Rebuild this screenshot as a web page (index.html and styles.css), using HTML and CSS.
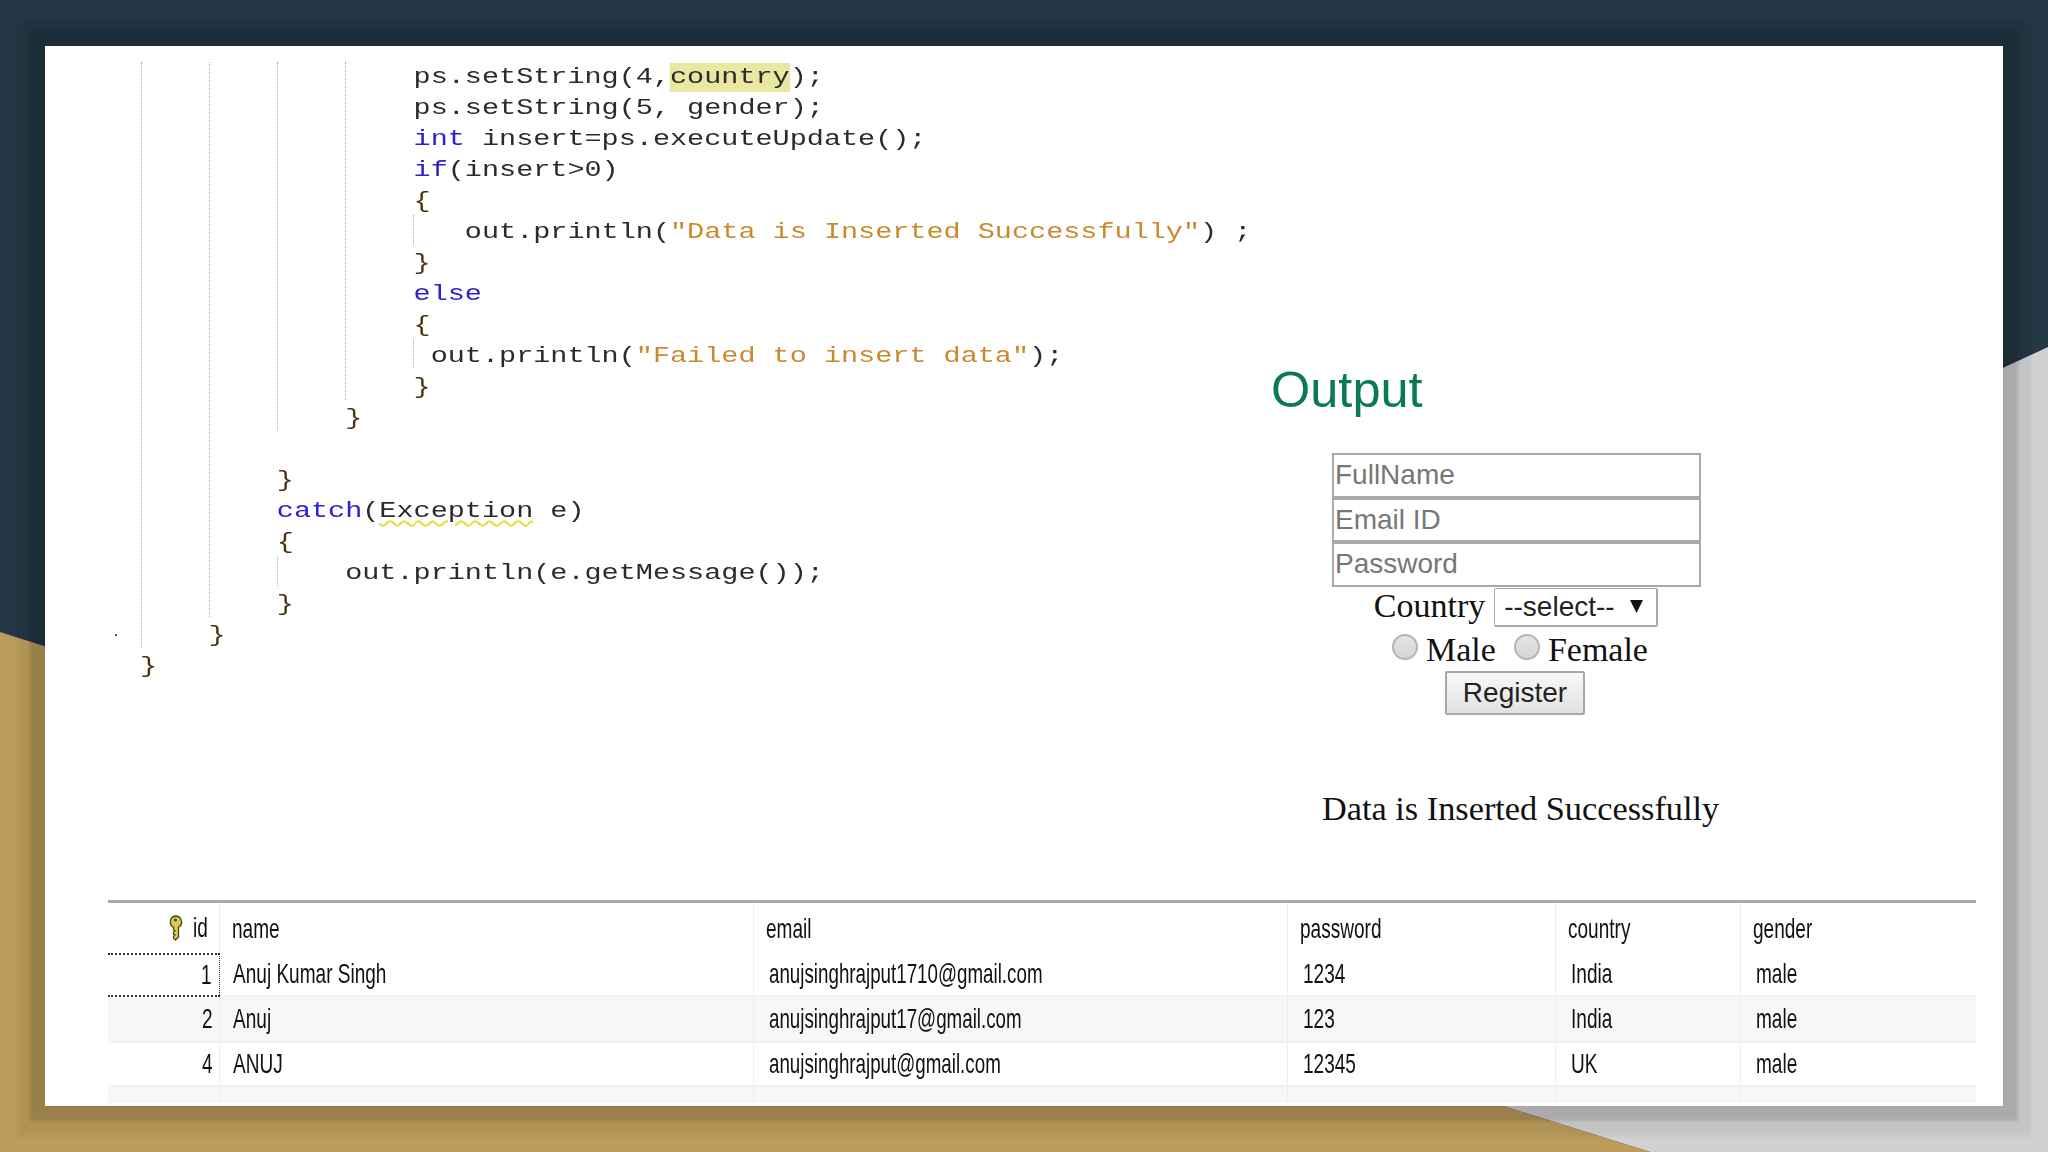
FILE: index.html
```html
<!DOCTYPE html>
<html lang="en">
<head>
<meta charset="utf-8">
<title>Output</title>
<link rel="stylesheet" href="styles.css">
</head>
<body>
<svg class="backdrop" width="2048" height="1152" viewBox="0 0 2048 1152" aria-hidden="true">
  <polygon class="bd-grey" points="2048,347 2048,1152 1650,1152 1503,1106 1503,600"/>
  <polygon class="bd-gold" points="0,632 1000,950 1503,1106 1650,1152 0,1152"/>
</svg>
<main class="card">
  <section class="top">
    <div class="code">
      <i class="guide g1"></i><i class="guide g2"></i><i class="guide g3"></i><i class="guide g4"></i>
      <i class="guide g5"></i><i class="guide g6"></i><i class="guide g7"></i>
      <i class="speck"></i>
      <div class="src">
        <div class="ln">                ps.setString(4,<span class="hl">country</span>);</div>
        <div class="ln">                ps.setString(5, gender);</div>
        <div class="ln">                <span class="kw">int</span> insert=ps.executeUpdate();</div>
        <div class="ln">                <span class="kw">if</span>(insert&gt;0)</div>
        <div class="ln">                <span class="br">{</span></div>
        <div class="ln">                   out.println(<span class="str">"Data is Inserted Successfully"</span>) ;</div>
        <div class="ln">                <span class="br">}</span></div>
        <div class="ln">                <span class="kw">else</span></div>
        <div class="ln">                <span class="br">{</span></div>
        <div class="ln">                 out.println(<span class="str">"Failed to insert data"</span>);</div>
        <div class="ln">                <span class="br">}</span></div>
        <div class="ln">            <span class="br">}</span></div>
        <div class="ln"></div>
        <div class="ln">        <span class="br">}</span></div>
        <div class="ln">        <span class="kw">catch</span>(<span class="warn">Exception</span> e)</div>
        <div class="ln">        <span class="br">{</span></div>
        <div class="ln">            out.println(e.getMessage());</div>
        <div class="ln">        <span class="br">}</span></div>
        <div class="ln">    <span class="br">}</span></div>
        <div class="ln"><span class="br">}</span></div>
      </div>
    </div>
    <div class="output">
      <h1 class="title">Output</h1>
      <form class="form">
        <input class="field" type="text" placeholder="FullName">
        <input class="field" type="text" placeholder="Email ID">
        <input class="field" type="text" placeholder="Password">
        <div class="row row-country">
          <label class="lbl" for="country">Country</label>
          <span class="select-wrap">
            <select class="select" id="country"><option>--select--</option></select>
            <svg class="caret" width="13" height="13" viewBox="0 0 13 13" aria-hidden="true"><polygon points="0,0 13,0 6.5,13"/></svg>
          </span>
        </div>
        <div class="row row-radio">
          <input class="radio" type="radio" name="g" id="m"><label class="lbl" for="m">Male</label>
          <input class="radio radio-f" type="radio" name="g" id="f"><label class="lbl" for="f">Female</label>
        </div>
        <button class="btn" type="button">Register</button>
      </form>
      <p class="msg">Data is Inserted Successfully</p>
    </div>
  </section>
  <section class="grid">
    <div class="c head idc"><svg class="key" width="15" height="26" viewBox="0 0 15 26" aria-hidden="true"><path d="M7.5 1a6 6 0 0 1 3 11.2V22l-3 3-2-2v-2l1.500-1-1.500-1v-2l1.500-1-1.500-1v-2.800A6 6 0 0 1 7.500 1z" fill="#dccb4e" stroke="#4a4518" stroke-width="1.300"/><circle cx="7.500" cy="5" r="1.500" fill="#4a4518"/></svg><span class="t tr">id</span></div>
    <div class="c head"><span class="t">name</span></div>
    <div class="c head"><span class="t">email</span></div>
    <div class="c head"><span class="t">password</span></div>
    <div class="c head"><span class="t">country</span></div>
    <div class="c head"><span class="t">gender</span></div>

    <div class="c num focus"><span class="t tr">1</span></div>
    <div class="c namec"><span class="t">Anuj Kumar Singh</span></div>
    <div class="c"><span class="t mail">anujsinghrajput1710@gmail.com</span></div>
    <div class="c"><span class="t">1234</span></div>
    <div class="c"><span class="t">India</span></div>
    <div class="c"><span class="t">male</span></div>

    <div class="c num alt"><span class="t tr">2</span></div>
    <div class="c namec alt"><span class="t">Anuj</span></div>
    <div class="c alt"><span class="t mail">anujsinghrajput17@gmail.com</span></div>
    <div class="c alt"><span class="t">123</span></div>
    <div class="c alt"><span class="t">India</span></div>
    <div class="c alt"><span class="t">male</span></div>

    <div class="c num"><span class="t tr">4</span></div>
    <div class="c namec"><span class="t">ANUJ</span></div>
    <div class="c"><span class="t mail">anujsinghrajput@gmail.com</span></div>
    <div class="c"><span class="t">12345</span></div>
    <div class="c"><span class="t">UK</span></div>
    <div class="c"><span class="t">male</span></div>

    <div class="c blank alt"></div>
    <div class="c blank alt"></div>
    <div class="c blank alt"></div>
    <div class="c blank alt"></div>
    <div class="c blank alt"></div>
    <div class="c blank alt"></div>
  </section>
</main>
</body>
</html>
```
FILE: styles.css
```css
html, body { margin: 0; padding: 0; }
body {
  width: 2048px;
  height: 1152px;
  overflow: hidden;
  background: #233844;
  position: relative;
  box-sizing: border-box;
  padding: 46px 45px 46px 45px;
}
.backdrop { position: absolute; left: 0; top: 0; }
.bd-gold { fill: #bb9c5a; }
.bd-grey { fill: #d1d1d3; }

.card {
  position: relative;
  width: 1958px;
  height: 1060px;
  background: #fff;
  display: flex;
  flex-direction: column;
  box-shadow:
    0 0 1px 0 rgba(0,0,0,.1),
    0 0 3px 15px rgba(0,0,0,.13),
    0 2px 4px 28px rgba(0,0,0,.06);
}

.top { display: flex; height: 854px; flex: none; }

.code { position: relative; width: 1226px; flex: none; padding: 16px 0 0 94.500px; box-sizing: border-box; }
.src {
  margin: 0;
  font: 22px/31px "Liberation Mono", monospace;
  color: #2b2b2b;
  transform: scaleX(1.295);
  transform-origin: left top;
  width: 860px;
  filter: blur(.3px);
}
.ln { white-space: pre; height: 31px; }
.kw { color: #2a22d0; }
.str { color: #c98a2e; }
.br { color: #4a3410; }
.hl { background: #e9e8a2; padding: 2px 0; }
.warn { text-decoration: underline wavy #e6dc3c 1.5px; text-underline-offset: 3px; }

.guide { position: absolute; width: 0; border-left: 1px dotted #a8a8a8; top: 16px; }
.g1 { left: 96px; height: 586px; }
.g2 { left: 164px; height: 555px; }
.g3 { left: 232px; height: 368px; }
.g4 { left: 300px; height: 338px; }
.g5 { left: 232px; top: 511px; height: 29px; }
.g6 { left: 368px; top: 169px; height: 30px; }
.g7 { left: 368px; top: 293px; height: 29px; }
.speck { position: absolute; left: 70px; top: 588px; width: 2px; height: 2px; background: #555; }

.output { flex: none; width: 500px; padding-top: 314px; box-sizing: border-box; }
.title {
  margin: 0;
  font: 400 50.500px/60px "Liberation Sans", Arial, sans-serif;
  color: #0a7a55;
}
.form {
  width: 369px;
  margin: 33px 0 0 61px;
  display: flex;
  flex-direction: column;
  align-items: center;
}
.field {
  width: 100%;
  height: 44.700px;
  box-sizing: border-box;
  border: 2px solid #a9a9a9;
  padding: 0 1px 1px;
  font: 28px "Liberation Sans", Arial, sans-serif;
  background: #fff;
  outline: none;
}
.field::placeholder { color: #777; opacity: 1; }
.row { display: flex; align-items: center; justify-content: center; font: 34px "Liberation Serif", "Times New Roman", serif; color: #111; }
.row-country { height: 39.900px; gap: 9px; margin-left: -1px; }
.row-country .lbl { position: relative; top: -1px; }
.row-radio { height: 42px; margin-left: 7px; padding-top: 4px; box-sizing: border-box; }
.lbl { line-height: 1; }
.select-wrap { position: relative; display: block; }
.select {
  display: block;
  appearance: none;
  width: 164px;
  height: 39px;
  box-sizing: border-box;
  border: 1px solid #a9a9a9;
  border-bottom-width: 2px;
  border-right-width: 2px;
  border-radius: 2px;
  background: #fff;
  padding: 0 0 0 9px;
  font: 28px "Liberation Sans", Arial, sans-serif;
  color: #222;
}
.caret { position: absolute; left: 136px; top: 12px; fill: #111; }
.radio {
  appearance: none;
  width: 26px;
  height: 26px;
  margin: 0 8px 6px 0;
  border-radius: 50%;
  border: 2px solid #b5b5b5;
  background: linear-gradient(#e4e4e4, #d6d6d6);
  box-sizing: border-box;
}
.radio-f { margin-left: 18px; }
.btn {
  width: 140px;
  height: 44px;
  margin: 2px 3px 0 0;
  box-sizing: border-box;
  border: 2px solid #a8a8a8;
  border-radius: 2px;
  background: linear-gradient(#f8f8f8, #e2e2e2);
  font: 28px "Liberation Sans", Arial, sans-serif;
  color: #222;
  padding: 0;
}
.msg {
  margin: 73px 0 0 51px;
  font: 34.300px/40px "Liberation Serif", "Times New Roman", serif;
  color: #111;
  white-space: nowrap;
}

.grid {
  margin-left: 63px;
  width: 1868px;
  display: grid;
  grid-template-columns: 112px 534px 534px 268px 185px 235px;
  grid-template-rows: 50px 44px 46px 44px 16px;
  border-top: 3px solid #aaa;
  font: 28px/1 "Liberation Sans", Arial, sans-serif;
  color: #111;
}
.c {
  display: flex;
  align-items: center;
  position: relative;
  padding-left: 15px;
  box-shadow: inset -1px 0 0 #eeeef0;
  overflow: hidden;
}
.c:nth-child(6n) { box-shadow: none; }
.namec { padding-left: 13px; }
.head { padding: 2px 0 0 12px; }
.c:not(.head) { border-bottom: 2px solid #f1f1f3; box-sizing: border-box; }
.alt { background: #f7f7f9; }
.blank { border-bottom: 0 !important; }
.t {
  display: inline-block;
  white-space: nowrap;
  transform: scaleX(.68);
  transform-origin: left center;
  filter: blur(.25px);
}
.mail { transform: scaleX(.67); }
.tr { transform-origin: right center; }
.num, .idc { justify-content: flex-end; padding: 0 7px 0 0; }
.idc { padding-right: 12px; gap: 3px; }
.key { flex: none; }
.focus {
  border-top: 2px dotted #333;
  border-bottom: 2px dotted #333 !important;
  border-right: 1px dotted #333;
  box-shadow: none;
}
```
